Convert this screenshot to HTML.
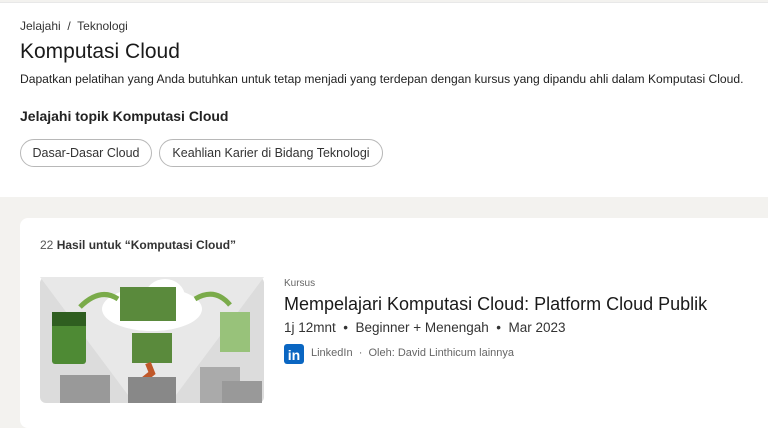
<!DOCTYPE html>
<html><head><meta charset="utf-8"><style>
*{margin:0;padding:0;box-sizing:border-box}
body{width:768px;height:414px;overflow:hidden;background:#f3f2ef;font-family:"Liberation Sans",Arial,sans-serif;color:#000000e6;position:relative}
.top{position:absolute;left:0;top:2px;width:768px;height:195px;background:#fff;border-top:1px solid #e8e8e8}
.abs{position:absolute;white-space:nowrap}
.pill{position:absolute;top:139px;height:28px;border:1px solid #b8b8b8;border-radius:14px;font-size:12.5px;line-height:26px;color:#333;text-align:center;white-space:nowrap}
.card{position:absolute;left:20px;top:218px;width:760px;height:210px;background:#fff;border-radius:8px}
</style></head><body>
<div class="top"></div>
<div class="abs" style="left:20px;top:19px;font-size:12px;color:#333">Jelajahi &nbsp;/&nbsp; Teknologi</div>
<div class="abs" style="left:20px;top:40px;font-size:21px;color:#1a1a1a">Komputasi Cloud</div>
<div class="abs" style="left:20px;top:72px;font-size:12.1px;color:#222">Dapatkan pelatihan yang Anda butuhkan untuk tetap menjadi yang terdepan dengan kursus yang dipandu ahli dalam Komputasi Cloud.</div>
<div class="abs" style="left:20px;top:108px;font-size:14px;font-weight:bold;color:#222">Jelajahi topik Komputasi Cloud</div>
<div class="pill" style="left:20px;width:132px">Dasar-Dasar Cloud</div>
<div class="pill" style="left:159px;width:224px">Keahlian Karier di Bidang Teknologi</div>
<div class="card"></div>
<div class="abs" style="left:40px;top:238px;font-size:12px;color:#555">22 <b style="color:#333">Hasil untuk “Komputasi Cloud”</b></div>
<svg class="abs" style="left:40px;top:277px" width="224" height="126" viewBox="0 0 224 126">
<rect width="224" height="126" rx="6" fill="#dcdcdc"/>
<path d="M0 0 L224 0 L130 126 L94 126 Z" fill="#e8e8e8"/>
<ellipse cx="112" cy="32" rx="50" ry="22" fill="#fff"/>
<ellipse cx="125" cy="20" rx="20" ry="18" fill="#fff"/>
<rect x="80" y="10" width="56" height="34" fill="#5a8a3c"/>
<path d="M40 30 Q60 10 78 22" stroke="#7aab4a" stroke-width="5" fill="none"/>
<path d="M155 22 Q175 10 190 28" stroke="#7aab4a" stroke-width="5" fill="none"/>
<rect x="12" y="35" width="34" height="52" rx="3" fill="#4e8a34"/>
<rect x="12" y="35" width="34" height="14" fill="#2f5e20"/>
<rect x="180" y="35" width="30" height="40" fill="#98c27a"/>
<rect x="92" y="56" width="40" height="30" fill="#5a8a3c"/>
<path d="M108 86 L112 96 L102 104" stroke="#c0582a" stroke-width="6" fill="none"/>
<rect x="20" y="98" width="50" height="28" fill="#999"/>
<rect x="88" y="100" width="48" height="26" fill="#888"/>
<rect x="160" y="90" width="40" height="36" fill="#aaa"/>
<rect x="182" y="104" width="40" height="22" fill="#999"/>
</svg>
<div class="abs" style="left:284px;top:278px;font-size:10px;color:#666">Kursus</div>
<div class="abs" style="left:284px;top:294px;font-size:18px;color:#1a1a1a">Mempelajari Komputasi Cloud: Platform Cloud Publik</div>
<div class="abs" style="left:284px;top:320px;font-size:13.5px;color:#333">1j 12mnt &nbsp;•&nbsp; Beginner + Menengah &nbsp;•&nbsp; Mar 2023</div>
<div class="abs" style="left:284px;top:344px;width:20px;height:20px;background:#0a66c2;border-radius:3px;color:#fff;font-weight:bold;font-size:14px;line-height:22px;text-align:center">in</div>
<div class="abs" style="left:311px;top:347px;font-size:11px;color:#666">LinkedIn &nbsp;·&nbsp; Oleh: David Linthicum lainnya</div>
</body></html>
